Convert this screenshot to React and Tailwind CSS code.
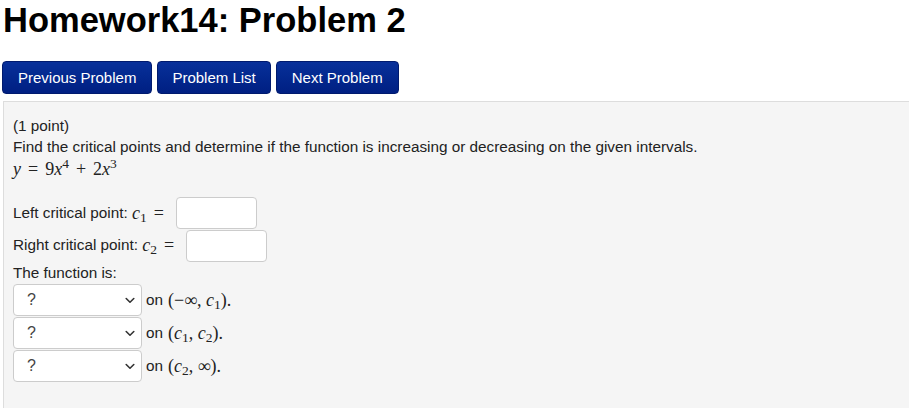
import React from "react";

const I = ({ children }) => <i className="italic">{children}</i>;

const Math = ({ children, className = "" }) => (
  <span className={"font-['Liberation_Serif',serif] text-[18px] " + className}>{children}</span>
);

const Btn = ({ children, px = "px-[15px]" }) => (
  <button className={"h-[33px] rounded-[4px] border border-[#001a6e] bg-gradient-to-b from-[#08309a] to-[#001f82] text-white text-[15px] leading-none font-['Liberation_Sans',Arial,sans-serif] " + px}>
    {children}
  </button>
);

const Input = ({ w = "w-[81px]" }) => (
  <div className={"h-[32px] rounded-[4px] border border-[#cccccc] bg-white " + w}></div>
);

const Select = ({ children }) => (
  <div className="flex items-center h-[32px]">
    <div className="w-[129px] h-[32px] rounded-[4px] border border-[#cccccc] bg-white flex items-center justify-between pl-[13px] pr-[6px] text-[#444] text-[16px]">
      <span>?</span>
      <svg width="10" height="7" viewBox="0 0 10 7">
        <path d="M1.2 1.5 L5 5.2 L8.8 1.5" fill="none" stroke="#333" strokeWidth="1.6" strokeLinecap="round" strokeLinejoin="round" />
      </svg>
    </div>
    <span className="ml-[4px] text-[15.3px] text-[#222]">on</span>
    <span className="ml-[5px]">{children}</span>
  </div>
);

export default function App() {
  return (
    <div className="w-[909px] h-[408px] overflow-hidden bg-white font-['Liberation_Sans',Arial,sans-serif] text-[#111]">
      <div className="pt-[3px] pl-[3px] text-[34.5px] leading-[34px] font-bold text-black">
        Homework14: Problem 2
      </div>
      <div className="flex gap-[5px] ml-[2px] mt-[24px]">
        <Btn>Previous Problem</Btn>
        <Btn px="px-[14px]">Problem List</Btn>
        <Btn>Next Problem</Btn>
      </div>
      <div className="ml-[3px] mt-[7px] h-[400px] bg-[#f5f5f5] border-t border-l border-[#dddddd] pl-[9px] pt-[13px] text-[15.3px] text-[#222]">
        <div className="leading-[21px]">(1 point)</div>
        <div className="leading-[21px]">Find the critical points and determine if the function is increasing or decreasing on the given intervals.</div>
        <div className="leading-[21px] pt-[2px]">
          <Math>
            <I>y</I>
            <span className="mx-[7px]">=</span>9<I>x</I>
            <sup>4</sup>
            <span className="mx-[7px]">+</span>2<I>x</I>
            <sup>3</sup>
          </Math>
        </div>
        <div className="mt-[17px] flex items-center h-[32px]">
          <span>Left critical point:&nbsp;</span>
          <Math>
            <I>c</I>
            <sub>1</sub>
            <span className="ml-[7px]">=</span>
          </Math>
          <div className="ml-[12px]">
            <Input w="w-[81px]" />
          </div>
        </div>
        <div className="flex items-center h-[33px]">
          <span>Right critical point:&nbsp;</span>
          <Math>
            <I>c</I>
            <sub>2</sub>
            <span className="ml-[7px]">=</span>
          </Math>
          <div className="ml-[12px]">
            <Input w="w-[81px]" />
          </div>
        </div>
        <div className="leading-[21px]">The function is:</div>
        <div className="mt-[1px] flex flex-col gap-[1px]">
          <Select>
            <Math>
              (−∞, <I>c</I>
              <sub>1</sub>).
            </Math>
          </Select>
          <Select>
            <Math>
              (<I>c</I>
              <sub>1</sub>, <I>c</I>
              <sub>2</sub>).
            </Math>
          </Select>
          <Select>
            <Math>
              (<I>c</I>
              <sub>2</sub>, ∞).
            </Math>
          </Select>
        </div>
      </div>
    </div>
  );
}
